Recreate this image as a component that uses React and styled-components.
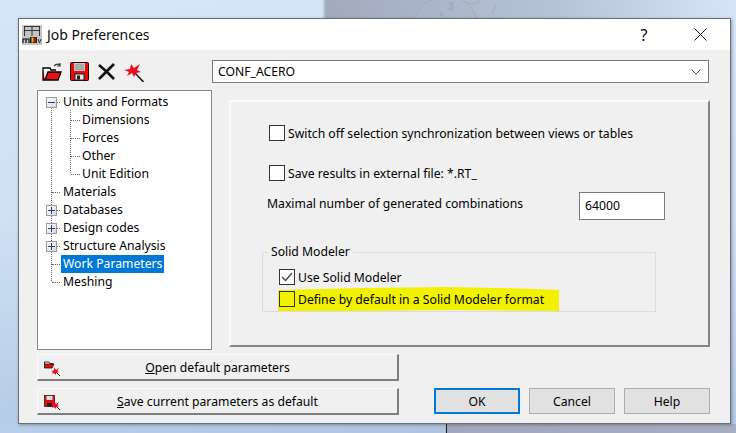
import React from "react";
import styled, { createGlobalStyle } from "styled-components";

const Global = createGlobalStyle`
  html, body { margin: 0; padding: 0; }
  body { width: 736px; height: 433px; overflow: hidden; }
  * { box-sizing: border-box; }
`;

const Desktop = styled.div`
  position: relative;
  width: 736px;
  height: 433px;
  padding: 18px 5px 9px 18px;
  overflow: hidden;
  background:
    linear-gradient(90deg, #d3e7f8 0, #d3e6f7 322px, #a2aabd 326px, #b6c3d8 560px, #d6e5f8 736px) top / 100% 18px no-repeat,
    linear-gradient(90deg, #b9cfe9 0, #b0c4de 445px, #a3a8bb 447px, #a8aec2 736px) bottom / 100% 9px no-repeat,
    linear-gradient(180deg, #d3e7f8 0%, #cfe1f4 50%, #b4cbe6 100%);
`;

const Sketch = styled.svg`
  position: absolute;
  left: 400px;
  top: 0;
  width: 110px;
  height: 18px;
  font-family: "Liberation Sans", sans-serif;
`;

const Wire = styled.span`
  position: absolute;
  left: 446px;
  top: 424px;
  width: 1px;
  height: 9px;
  background: #1a1a1a;
`;

const Window = styled.div`
  position: relative;
  height: 406px;
  display: flex;
  flex-direction: column;
  background: #f0f0f0;
  border: 1px solid #6b6f74;
  box-shadow: 1px 1px 3px rgba(60, 60, 70, 0.45);
  font-family: "Noto Sans", sans-serif;
  font-size: 12.2px;
  color: #000;
`;

const TitleBar = styled.div`
  height: 31px;
  flex: none;
  display: flex;
  align-items: center;
  background: #fff;
  padding-left: 3px;
`;

const Title = styled.div`
  margin-left: 5px;
  flex: 1;
  font-size: 14px;
  color: #0c0c0c;
`;

const HelpMark = styled.div`
  width: 14px;
  margin-right: 43px;
  font-size: 16px;
  text-align: center;
`;

const CloseMark = styled.svg`
  width: 13px;
  height: 13px;
  margin-right: 23px;
`;

const Body = styled.div`
  flex: 1;
  display: grid;
  grid-template-columns: 175px 1fr;
  grid-template-rows: 30px 260px auto;
  align-content: start;
  column-gap: 17px;
  padding: 10px 20px 0 18px;
`;

const Toolbar = styled.div`
  grid-column: 1 / 3;
  height: 23px;
  display: flex;
`;

const Tools = styled.div`
  width: 175px;
  flex: none;
  display: flex;
  align-items: center;
  gap: 8px;
  padding-left: 5px;
`;

const ComboBox = styled.div`
  flex: 1;
  display: flex;
  align-items: center;
  justify-content: space-between;
  margin-right: 1px;
  background: #fff;
  border: 1px solid #7a7a7a;
  padding: 0 7px 0 5px;
`;

const Tree = styled.div`
  position: relative;
  background: #fff;
  border: 1px solid #82878c;
  padding: 2px 0 0 2px;
`;

const TreeRow = styled.div`
  position: relative;
  height: 18px;
  display: flex;
  align-items: center;
  padding-left: ${(p) => (p.$child ? 40 : 21)}px;
  &::before {
    content: "";
    position: absolute;
    left: ${(p) => (p.$child ? 31 : 12)}px;
    top: 9px;
    width: ${(p) => (p.$child ? 9 : 8)}px;
    border-top: 1px dotted #666;
  }
`;

const Trunk = styled.span`
  position: absolute;
  left: ${(p) => p.$left}px;
  top: ${(p) => p.$top}px;
  height: ${(p) => p.$height}px;
  border-left: 1px dotted #666;
`;

const TreeLabel = styled.span`
  position: relative;
  padding: 0 2px;
  line-height: 18px;
  background: ${(p) => (p.$selected ? "#0078d7" : "transparent")};
  color: ${(p) => (p.$selected ? "#fff" : "#000")};
`;

const Expander = styled.span`
  position: absolute;
  left: 6px;
  top: 4px;
  width: 11px;
  height: 11px;
  display: flex;
  align-items: center;
  justify-content: center;
  background: linear-gradient(135deg, #fff, #d6d6d6);
  border: 1px solid #9a9a9a;
  z-index: 1;
  color: #1f3f80;
`;

const Panel = styled.div`
  margin-top: 10px;
  margin-bottom: 3px;
  border-top: 2px solid #fbfbfb;
  border-left: 2px solid #fbfbfb;
  border-right: 2px solid #858585;
  border-bottom: 2px solid #858585;
  padding: 23px 0 0 38px;
  display: flex;
  flex-direction: column;
`;

const CheckRow = styled.div`
  display: flex;
  align-items: center;
  gap: 3px;
  height: 16px;
  margin-bottom: ${(p) => p.$gap || 0}px;
`;

const CheckBox = styled.span`
  width: 16px;
  height: 16px;
  flex: none;
  display: flex;
  align-items: center;
  justify-content: center;
  background: ${(p) => p.$bg || "#fff"};
  border: 1px solid #333;
`;

const CountRow = styled.div`
  display: flex;
  align-items: flex-start;
  margin-left: -2px;
  height: 28px;
  margin-top: 11px;
`;

const CountLabel = styled.div`
  width: 312px;
  line-height: 23px;
`;

const CountInput = styled.div`
  width: 86px;
  height: 28px;
  padding: 0 5px;
  line-height: 25px;
  background: #fff;
  border: 1px solid #7a7a7a;
`;

const Group = styled.fieldset`
  width: 394px;
  height: 67px;
  margin: 25px 0 0 -7px;
  padding: 10px 0 0 16px;
  border: 1px solid #dcdcdc;
  display: flex;
  flex-direction: column;
  gap: 6px;
`;

const Legend = styled.legend`
  margin-left: -11px;
  padding: 0 3px;
  line-height: 14px;
`;

const Marked = styled.div`
  position: relative;
  z-index: 0;
  &::before {
    content: "";
    position: absolute;
    z-index: -1;
    left: -1px;
    top: -4px;
    width: 281px;
    height: 24px;
    background: #f2f200;
    clip-path: polygon(0 12%, 30% 4%, 60% 0, 92% 8%, 100% 12%, 100% 100%, 62% 96%, 25% 100%, 0 100%);
  }
`;

const FootLeft = styled.div`
  display: flex;
  flex-direction: column;
  gap: 7px;
  width: 362px;
`;

const Foot = styled.div`
  grid-column: 1 / 3;
  margin-top: 4px;
  display: flex;
  justify-content: space-between;
  align-items: flex-end;
`;

const WideButton = styled.div`
  position: relative;
  height: 27px;
  display: flex;
  align-items: center;
  justify-content: center;
  background: #f0f0f0;
  border-top: 1px solid #fbfbfb;
  border-left: 1px solid #fbfbfb;
  border-right: 2px solid #7e7e7e;
  border-bottom: 2px solid #7e7e7e;
`;

const ButtonIcon = styled.svg`
  position: absolute;
  left: 6px;
  top: 6px;
  width: 16px;
  height: 15px;
`;

const Actions = styled.div`
  display: flex;
  gap: 9px;
  margin-bottom: 1px;
`;

const Action = styled.div`
  width: 86px;
  height: 26px;
  display: flex;
  align-items: center;
  justify-content: center;
  background: #e1e1e1;
  border: ${(p) => (p.$primary ? "2px solid #0078d7" : "1px solid #adadad")};
`;

const Key = styled.span`
  text-decoration: underline;
`;

const FolderIcon = () => (
  <svg width="20" height="20" viewBox="0 0 20 20">
    <path d="M1 8V18H16L19 10H6L3 18" fill="#e81010" stroke="#000" strokeWidth="1.3" />
    <path d="M1 8V6H8L9 8H14" fill="#fff" stroke="#000" strokeWidth="1.3" />
    <path d="M12 4Q15 1 18 3M18 1V4H15" fill="none" stroke="#333" strokeWidth="1.2" />
  </svg>
);

const DiskIcon = () => (
  <svg width="19" height="19" viewBox="0 0 19 19">
    <rect x="0.5" y="0.5" width="18" height="18" rx="1" fill="#e80d0d" stroke="#300" />
    <rect x="4" y="1" width="11" height="8" fill="#c8c8c8" />
    <path d="M5 3H14M5 5H14M5 7H14" stroke="#8a8a8a" />
    <rect x="5" y="12" width="9" height="6" fill="#e6e6e6" stroke="#222" />
    <rect x="7" y="13.5" width="3" height="4" fill="#222" />
  </svg>
);

const CrossIcon = () => (
  <svg width="19" height="19" viewBox="0 0 19 19">
    <path d="M2 3L10 10L17 17M17 2L9 10L2 17" fill="none" stroke="#111" strokeWidth="2.6" />
  </svg>
);

const StarIcon = () => (
  <svg width="20" height="20" viewBox="0 0 20 20">
    <path d="M10 10L19.5 20" stroke="#222" strokeWidth="1.6" />
    <path d="M0 8L6 7L7 2L10 6L16 2L13 8L17 10L12 11L10 15L8 11L3 14L5 10Z" fill="#f00c1c" />
  </svg>
);

const MiniStar = () => (
  <>
    <path d="M12 11L16 15" stroke="#222" strokeWidth="1" />
    <path d="M7 10L10 9.5L10.5 6.5L12 9L15 7L13.5 10L15 11.5L12.5 11.5L11.5 14L10 12L8 13L9 11Z" fill="#f00c1c" />
  </>
);

const TREE = [
  { label: "Units and Formats", open: true },
  { label: "Dimensions", child: true },
  { label: "Forces", child: true },
  { label: "Other", child: true },
  { label: "Unit Edition", child: true },
  { label: "Materials" },
  { label: "Databases", closed: true },
  { label: "Design codes", closed: true },
  { label: "Structure Analysis", closed: true },
  { label: "Work Parameters", selected: true },
  { label: "Meshing" },
];

function App() {
  return (
    <Desktop>
      <Global />
      <Sketch viewBox="0 0 110 18">
        <path d="M15 18Q20 2 32 0M62 0Q72 8 80 0M70 6Q74 12 76 18M92 14L96 5" fill="none" stroke="#a9aab4" strokeWidth="1" />
        <text x="48" y="10" fontSize="10" fill="#9b9fae">3</text>
        <text x="39" y="17" fontSize="8" fill="#9b9fae">4</text>
      </Sketch>
      <Wire />
      <Window>
        <TitleBar>
          <svg width="20" height="20" viewBox="0 0 20 20">
            <rect width="20" height="20" fill="#c4c4c4" />
            <path d="M2 1.5H18M2 5.5H18M2.5 1.5V11M10 1.5V11M17.5 1.5V11" fill="none" stroke="#333" strokeWidth="1" />
            <path d="M1 18V14H7V18M4 14V18" fill="none" stroke="#111" strokeWidth="1.2" />
            <rect x="8" y="12" width="7" height="6" fill="#222" />
            <rect x="9.5" y="12.5" width="2" height="5" fill="#e8c010" />
            <rect x="12" y="12.5" width="2" height="5" fill="#c01010" />
            <path d="M16 14L17.5 18L19 14" stroke="#333" fill="none" />
          </svg>
          <Title>Job Preferences</Title>
          <HelpMark>?</HelpMark>
          <CloseMark viewBox="0 0 13 13">
            <path d="M0.5 0.5L12.5 12.5M12.5 0.5L0.5 12.5" stroke="#111" strokeWidth="1" />
          </CloseMark>
        </TitleBar>
        <Body>
          <Toolbar>
            <Tools>
              <FolderIcon />
              <DiskIcon />
              <CrossIcon />
              <StarIcon />
            </Tools>
            <ComboBox>
              CONF_ACERO
              <svg width="10" height="6" viewBox="0 0 10 6">
                <path d="M0.5 0.5L5 5L9.5 0.5" fill="none" stroke="#555" />
              </svg>
            </ComboBox>
          </Toolbar>
          <Tree>
            <Trunk $left={13} $top={17} $height={173} />
            <Trunk $left={32} $top={19} $height={63} />
            {TREE.map((row) => (
              <TreeRow key={row.label} $child={row.child}>
                {row.open && (
                  <Expander>
                    <svg width="7" height="7" viewBox="0 0 7 7"><path d="M0 3.5H7" stroke="currentColor" /></svg>
                  </Expander>
                )}
                {row.closed && (
                  <Expander>
                    <svg width="7" height="7" viewBox="0 0 7 7"><path d="M0 3.5H7M3.5 0V7" stroke="currentColor" /></svg>
                  </Expander>
                )}
                <TreeLabel $selected={row.selected}>{row.label}</TreeLabel>
              </TreeRow>
            ))}
          </Tree>
          <Panel>
            <CheckRow $gap={24}>
              <CheckBox />
              Switch off selection synchronization between views or tables
            </CheckRow>
            <CheckRow>
              <CheckBox />
              Save results in external file: *.RT_
            </CheckRow>
            <CountRow>
              <CountLabel>Maximal number of generated combinations</CountLabel>
              <CountInput>64000</CountInput>
            </CountRow>
            <Group>
              <Legend>Solid Modeler</Legend>
              <CheckRow>
                <CheckBox>
                  <svg width="12" height="10" viewBox="0 0 12 10">
                    <path d="M1 5L4.5 8.5L11 1" fill="none" stroke="#444" strokeWidth="1.3" />
                  </svg>
                </CheckBox>
                Use Solid Modeler
              </CheckRow>
              <Marked>
                <CheckRow>
                  <CheckBox $bg="#f2f200" />
                  Define by default in a Solid Modeler format
                </CheckRow>
              </Marked>
            </Group>
          </Panel>
          <Foot>
            <FootLeft>
              <WideButton>
                <ButtonIcon viewBox="0 0 16 15">
                  <path d="M0.5 3V1H5L6 2.5H9" fill="#fff" stroke="#111" strokeWidth="0.9" />
                  <path d="M0.5 3H10L8 7H0.5Z" fill="#e81010" stroke="#111" strokeWidth="0.8" />
                  <MiniStar />
                </ButtonIcon>
                <span><Key>O</Key>pen default parameters</span>
              </WideButton>
              <WideButton>
                <ButtonIcon viewBox="0 0 16 15">
                  <rect x="0.5" y="0.5" width="10" height="11" fill="#e80d0d" stroke="#222" strokeWidth="0.8" />
                  <rect x="2.5" y="1" width="6" height="4" fill="#ddd" />
                  <rect x="3" y="8" width="5" height="3.5" fill="#222" />
                  <MiniStar />
                </ButtonIcon>
                <span><Key>S</Key>ave current parameters as default</span>
              </WideButton>
            </FootLeft>
            <Actions>
              <Action $primary>OK</Action>
              <Action>Cancel</Action>
              <Action>Help</Action>
            </Actions>
          </Foot>
        </Body>
      </Window>
    </Desktop>
  );
}

export default App;
